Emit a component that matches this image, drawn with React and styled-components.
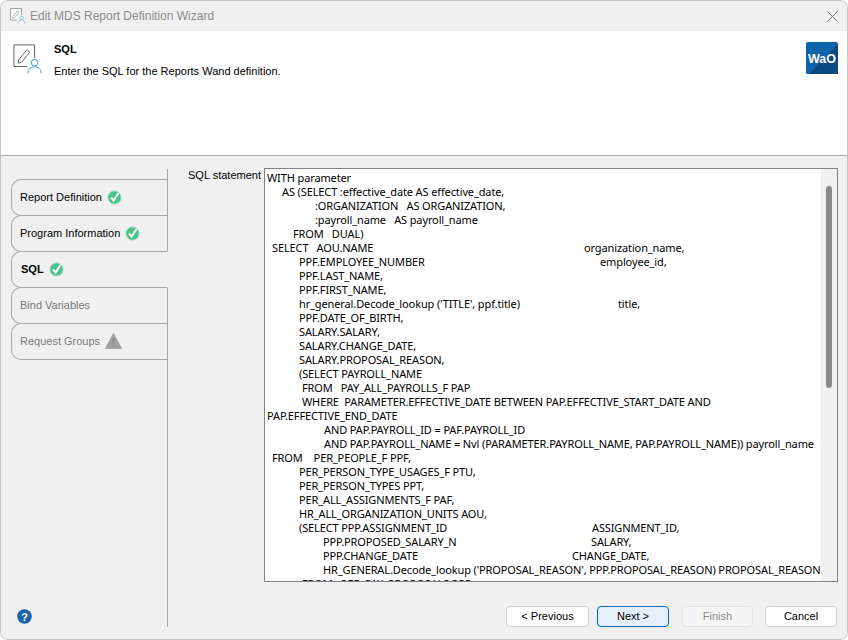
import React from 'react';
import styled, { createGlobalStyle } from 'styled-components';

const sqlLines = [
  { x: 0, text: 'WITH parameter' },
  { x: 15, text: 'AS (SELECT :effective_date AS effective_date,' },
  { x: 48, text: ':ORGANIZATION   AS ORGANIZATION,' },
  { x: 48, text: ':payroll_name   AS payroll_name' },
  { x: 26, text: 'FROM   DUAL)' },
  { x: 5, text: 'SELECT   AOU.NAME', tail: 'organization_name,', tailX: 317 },
  { x: 32, text: 'PPF.EMPLOYEE_NUMBER', tail: 'employee_id,', tailX: 333 },
  { x: 32, text: 'PPF.LAST_NAME,' },
  { x: 32, text: 'PPF.FIRST_NAME,' },
  { x: 32, text: "hr_general.Decode_lookup ('TITLE', ppf.title)", tail: 'title,', tailX: 351 },
  { x: 32, text: 'PPF.DATE_OF_BIRTH,' },
  { x: 32, text: 'SALARY.SALARY,' },
  { x: 32, text: 'SALARY.CHANGE_DATE,' },
  { x: 32, text: 'SALARY.PROPOSAL_REASON,' },
  { x: 32, text: '(SELECT PAYROLL_NAME' },
  { x: 35, text: 'FROM   PAY_ALL_PAYROLLS_F PAP' },
  { x: 35, text: 'WHERE  PARAMETER.EFFECTIVE_DATE BETWEEN PAP.EFFECTIVE_START_DATE AND' },
  { x: 0, text: 'PAP.EFFECTIVE_END_DATE' },
  { x: 57, text: 'AND PAP.PAYROLL_ID = PAF.PAYROLL_ID' },
  { x: 57, text: 'AND PAP.PAYROLL_NAME = Nvl (PARAMETER.PAYROLL_NAME, PAP.PAYROLL_NAME)) payroll_name' },
  { x: 5, text: 'FROM    PER_PEOPLE_F PPF,' },
  { x: 32, text: 'PER_PERSON_TYPE_USAGES_F PTU,' },
  { x: 32, text: 'PER_PERSON_TYPES PPT,' },
  { x: 32, text: 'PER_ALL_ASSIGNMENTS_F PAF,' },
  { x: 32, text: 'HR_ALL_ORGANIZATION_UNITS AOU,' },
  { x: 32, text: '(SELECT PPP.ASSIGNMENT_ID', tail: 'ASSIGNMENT_ID,', tailX: 325 },
  { x: 56, text: 'PPP.PROPOSED_SALARY_N', tail: 'SALARY,', tailX: 324 },
  { x: 56, text: 'PPP.CHANGE_DATE', tail: 'CHANGE_DATE,', tailX: 305 },
  { x: 56, text: "HR_GENERAL.Decode_lookup ('PROPOSAL_REASON', PPP.PROPOSAL_REASON) PROPOSAL_REASON" },
  { x: 35, text: 'FROM   PER_PAY_PROPOSALS PPP' },
];

const tabs = [
  { label: 'Report Definition', status: 'done' },
  { label: 'Program Information', status: 'done' },
  { label: 'SQL', status: 'done', active: true },
  { label: 'Bind Variables', disabled: true },
  { label: 'Request Groups', status: 'warn', disabled: true },
];

const GlobalStyle = createGlobalStyle`
  html, body {
    margin: 0;
    padding: 0;
    background: #ffffff;
  }
  body {
    font-family: "Liberation Sans", Arial, sans-serif;
    font-size: 11px;
    color: #000;
  }
`;

const Window = styled.div`
  width: 848px;
  height: 640px;
  box-sizing: border-box;
  border: 1px solid #c4c4c4;
  border-radius: 8px;
  background: #f0f0f0;
  overflow: hidden;
  display: flex;
  flex-direction: column;
`;

const TitleBar = styled.div`
  height: 30px;
  flex-shrink: 0;
  display: flex;
  align-items: center;
  padding: 0 9px 0 9px;
  gap: 4px;
  color: #8c8c8c;
  font-size: 12px;
`;

const TitleText = styled.span`
  flex: 1;
`;

const Header = styled.div`
  height: 125px;
  box-sizing: border-box;
  flex-shrink: 0;
  background: #ffffff;
  border-bottom: 1px solid #a8a8a8;
  display: flex;
  align-items: flex-start;
  padding: 11px 9px 0 12px;
  gap: 11px;
`;

const HeaderIcon = styled.div`
  margin-top: 2px;
  line-height: 0;
`;

const HeaderText = styled.div`
  flex: 1;
  display: flex;
  flex-direction: column;
  gap: 7px;
`;

const HeaderTitle = styled.div`
  font-weight: 700;
  line-height: 15px;
`;

const HeaderSub = styled.div`
  line-height: 15px;
`;

const Body = styled.div`
  flex: 1;
  min-height: 0;
  display: flex;
  padding-top: 12px;
`;

const Sidebar = styled.div`
  width: 167px;
  flex-shrink: 0;
  box-sizing: border-box;
  height: 458px;
  margin-top: 1px;
  border-right: 1px solid #a8a8a8;
  padding: 10px 0 3px 10px;
  display: flex;
  flex-direction: column;
`;

const Tab = styled.div`
  height: 37px;
  box-sizing: border-box;
  flex-shrink: 0;
  display: flex;
  align-items: center;
  gap: 5px;
  padding: 0 0 1px ${p => (p.$active ? '9px' : '8px')};
  margin-right: ${p => (p.$active ? '-1px' : '0')};
  margin-top: ${p => (p.$first ? '0' : '-1px')};
  border: 1px solid #a8a8a8;
  border-right: ${p => (p.$active ? '1px solid #f0f0f0' : 'none')};
  border-radius: 10px 0 0 10px;
  font-weight: ${p => (p.$active ? 700 : 400)};
  color: ${p => (p.$disabled ? '#7a7a7a' : '#000')};
  background: #f0f0f0;
  position: relative;
  z-index: ${p => (p.$active ? 1 : 0)};
`;

const HelpButton = styled.div`
  margin-top: auto;
  margin-left: 6px;
  width: 15px;
  height: 15px;
  line-height: 0;
`;

const Content = styled.div`
  flex: 1;
  min-width: 0;
  display: flex;
  flex-direction: column;
`;

const SqlRow = styled.div`
  display: flex;
  padding: 0 0 0 20px;
  gap: 5px;
`;

const FieldLabel = styled.label`
  line-height: 14px;
  width: 71px;
  flex-shrink: 0;
  white-space: nowrap;
`;

const SqlBox = styled.div`
  width: 574px;
  height: 414px;
  box-sizing: border-box;
  border: 1px solid #82828c;
  background: #ffffff;
  display: flex;
  overflow: hidden;
`;

const SqlText = styled.div`
  flex: 1;
  min-width: 0;
  padding: 2px 0 0 2px;
  overflow: hidden;
  font-family: "Noto Sans", "Liberation Sans", sans-serif;
  letter-spacing: -0.12px;
`;

const SqlLine = styled.div`
  height: 14px;
  line-height: 14px;
  white-space: pre;
  position: relative;
`;

const TailText = styled.span`
  position: absolute;
  top: 0;
`;

const ScrollTrack = styled.div`
  width: 16px;
  flex-shrink: 0;
  background: #f0f0f0;
  padding-top: 17px;
  display: flex;
  justify-content: center;
`;

const ScrollThumb = styled.div`
  width: 6px;
  height: 202px;
  border-radius: 3px;
  background: #8a8a8a;
`;

const Footer = styled.div`
  display: flex;
  justify-content: flex-end;
  padding: 24px 10px 0 0;
`;

const Button = styled.button`
  height: 21px;
  box-sizing: border-box;
  width: ${p => p.$w}px;
  margin-left: ${p => p.$gap}px;
  padding: 0 0 2px;
  border: 1px solid ${p => (p.$primary ? '#0067c0' : p.$disabled ? '#e2e2e2' : '#d0d0d0')};
  border-radius: 4px;
  background: ${p => (p.$primary ? '#e5f0fa' : p.$disabled ? '#f5f5f5' : '#fdfdfd')};
  color: ${p => (p.$disabled ? '#8e8e8e' : '#000')};
  font-family: inherit;
  font-size: 11px;
`;

const CheckIcon = () => (
  <svg width="15" height="15" viewBox="0 0 15 15">
    <circle cx="7.5" cy="7.5" r="6.5" fill="#4cc28c" stroke="#8fd8b5" strokeWidth="1" />
    <path d="M4 7.5l2.6 3L11.5 3" fill="none" stroke="#fff" strokeWidth="2" />
  </svg>
);

const WarnIcon = () => (
  <svg width="17" height="16" viewBox="0 0 17 16">
    <path d="M8.5 0.5L16.5 15.5H0.5Z" fill="#a0a0a0" stroke="#a0a0a0" strokeLinejoin="round" />
    <path d="M8.5 5v5.5M8.5 11.8v1.5" stroke="#8a8a8a" strokeWidth="1.6" />
  </svg>
);

const WizardIcon = ({ size }) => (
  <svg width={size} height={size} viewBox="0 0 32 32">
    <path d="M23 15V1H1v23h14" fill="#fff" stroke="#555" strokeWidth="1" />
    <path d="M6 17l9-11 3 2.5-9 11-3.5 1z" fill="none" stroke="#666" strokeWidth="1" />
    <circle cx="23" cy="20" r="3.5" fill="#fff" stroke="#2f96dc" strokeWidth="1" />
    <path d="M16 31c0-9 14-9 14 0" fill="#fff" stroke="#2f96dc" strokeWidth="1" />
  </svg>
);

const CloseIcon = () => (
  <svg width="11" height="11" viewBox="0 0 11 11">
    <path d="M.5.5l10 10M10.5.5l-10 10" stroke="#7c7c7c" strokeWidth="1" />
  </svg>
);

const Logo = () => (
  <svg width="32" height="32" viewBox="0 0 32 32">
    <rect width="32" height="32" rx="1.5" fill="#0f62ac" />
    <path d="M32 2L3 32h29z" fill="#0a4a80" />
    <text x="16" y="21" textAnchor="middle" fill="#fff" fontSize="12.5" fontWeight="700" fontFamily="Liberation Sans, sans-serif">WaO</text>
  </svg>
);

const HelpIcon = () => (
  <svg width="15" height="15" viewBox="0 0 15 15">
    <circle cx="7.5" cy="7.5" r="7.3" fill="#1c64a8" />
    <text x="7.5" y="11.5" textAnchor="middle" fill="#fff" fontSize="11" fontWeight="700" fontFamily="Liberation Sans, sans-serif">?</text>
  </svg>
);

const App = () => {
  return (
    <Window>
      <GlobalStyle />
      <TitleBar>
        <WizardIcon size={16} />
        <TitleText>Edit MDS Report Definition Wizard</TitleText>
        <CloseIcon />
      </TitleBar>
      <Header>
        <HeaderIcon><WizardIcon size={30} /></HeaderIcon>
        <HeaderText>
          <HeaderTitle>SQL</HeaderTitle>
          <HeaderSub>Enter the SQL for the Reports Wand definition.</HeaderSub>
        </HeaderText>
        <Logo />
      </Header>
      <Body>
        <Sidebar>
          {tabs.map((tab, i) => (
            <Tab key={tab.label} $first={i === 0} $active={tab.active} $disabled={tab.disabled}>
              {tab.label}
              {tab.status === 'done' && <CheckIcon />}
              {tab.status === 'warn' && <WarnIcon />}
            </Tab>
          ))}
          <HelpButton><HelpIcon /></HelpButton>
        </Sidebar>
        <Content>
          <SqlRow>
            <FieldLabel>SQL statement</FieldLabel>
            <SqlBox>
              <SqlText>
                {sqlLines.map((line, i) => (
                  <SqlLine key={i} style={{ paddingLeft: line.x }}>
                    {line.text}
                    {line.tail && <TailText style={{ left: line.tailX }}>{line.tail}</TailText>}
                  </SqlLine>
                ))}
              </SqlText>
              <ScrollTrack><ScrollThumb /></ScrollTrack>
            </SqlBox>
          </SqlRow>
          <Footer>
            <Button $w={83} $gap={0}>&lt; Previous</Button>
            <Button $w={72} $gap={8} $primary>Next &gt;</Button>
            <Button $w={71} $gap={13} $disabled>Finish</Button>
            <Button $w={72} $gap={12}>Cancel</Button>
          </Footer>
        </Content>
      </Body>
    </Window>
  );
};

export default App;
